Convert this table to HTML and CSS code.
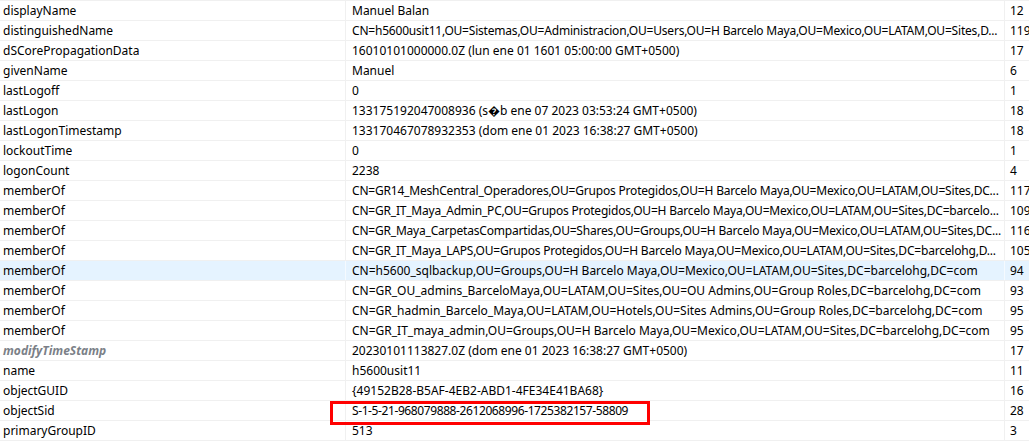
FILE: index.html
```html
<!DOCTYPE html>
<html>
<head>
<meta charset="utf-8">
<link rel="stylesheet" href="styles.css">
</head>
<body>
<div class="grid">
  <div class="row"><div class="c name">displayName</div><div class="c val">Manuel Balan</div><div class="c len">12</div></div>
  <div class="row"><div class="c name">distinguishedName</div><div class="c val tr">CN=h5600usit11,OU=Sistemas,OU=Administracion,OU=Users,OU=H Barcelo Maya,OU=Mexico,OU=LATAM,OU=Sites,D...</div><div class="c len">119</div></div>
  <div class="row"><div class="c name">dSCorePropagationData</div><div class="c val">16010101000000.0Z (lun ene 01 1601 05:00:00 GMT+0500)</div><div class="c len">17</div></div>
  <div class="row"><div class="c name">givenName</div><div class="c val">Manuel</div><div class="c len">6</div></div>
  <div class="row"><div class="c name">lastLogoff</div><div class="c val">0</div><div class="c len">1</div></div>
  <div class="row"><div class="c name">lastLogon</div><div class="c val">133175192047008936 (s�b ene 07 2023 03:53:24 GMT+0500)</div><div class="c len">18</div></div>
  <div class="row"><div class="c name">lastLogonTimestamp</div><div class="c val">133170467078932353 (dom ene 01 2023 16:38:27 GMT+0500)</div><div class="c len">18</div></div>
  <div class="row"><div class="c name">lockoutTime</div><div class="c val">0</div><div class="c len">1</div></div>
  <div class="row"><div class="c name">logonCount</div><div class="c val">2238</div><div class="c len">4</div></div>
  <div class="row"><div class="c name">memberOf</div><div class="c val tr">CN=GR14_MeshCentral_Operadores,OU=Grupos Protegidos,OU=H Barcelo Maya,OU=Mexico,OU=LATAM,OU=Sites,DC...</div><div class="c len">117</div></div>
  <div class="row"><div class="c name">memberOf</div><div class="c val tr">CN=GR_IT_Maya_Admin_PC,OU=Grupos Protegidos,OU=H Barcelo Maya,OU=Mexico,OU=LATAM,OU=Sites,DC=barcelo...</div><div class="c len">109</div></div>
  <div class="row"><div class="c name">memberOf</div><div class="c val tr">CN=GR_Maya_CarpetasCompartidas,OU=Shares,OU=Groups,OU=H Barcelo Maya,OU=Mexico,OU=LATAM,OU=Sites,DC...</div><div class="c len">116</div></div>
  <div class="row"><div class="c name">memberOf</div><div class="c val tr">CN=GR_IT_Maya_LAPS,OU=Grupos Protegidos,OU=H Barcelo Maya,OU=Mexico,OU=LATAM,OU=Sites,DC=barcelohg,D...</div><div class="c len">105</div></div>
  <div class="row hl"><div class="c name">memberOf</div><div class="c val">CN=h5600_sqlbackup,OU=Groups,OU=H Barcelo Maya,OU=Mexico,OU=LATAM,OU=Sites,DC=barcelohg,DC=com</div><div class="c len">94</div></div>
  <div class="row"><div class="c name">memberOf</div><div class="c val">CN=GR_OU_admins_BarceloMaya,OU=LATAM,OU=Sites,OU=OU Admins,OU=Group Roles,DC=barcelohg,DC=com</div><div class="c len">93</div></div>
  <div class="row"><div class="c name">memberOf</div><div class="c val">CN=GR_hadmin_Barcelo_Maya,OU=LATAM,OU=Hotels,OU=Sites Admins,OU=Group Roles,DC=barcelohg,DC=com</div><div class="c len">95</div></div>
  <div class="row"><div class="c name">memberOf</div><div class="c val">CN=GR_IT_maya_admin,OU=Groups,OU=H Barcelo Maya,OU=Mexico,OU=LATAM,OU=Sites,DC=barcelohg,DC=com</div><div class="c len">95</div></div>
  <div class="row"><div class="c name op">modifyTimeStamp</div><div class="c val">20230101113827.0Z (dom ene 01 2023 16:38:27 GMT+0500)</div><div class="c len">17</div></div>
  <div class="row"><div class="c name">name</div><div class="c val">h5600usit11</div><div class="c len">11</div></div>
  <div class="row"><div class="c name">objectGUID</div><div class="c val">{49152B28-B5AF-4EB2-ABD1-4FE34E41BA68}</div><div class="c len">16</div></div>
  <div class="row"><div class="c name">objectSid</div><div class="c val marked"><span class="txt">S-1-5-21-968079888-2612068996-1725382157-58809</span><span class="mark"></span></div><div class="c len">28</div></div>
  <div class="row"><div class="c name">primaryGroupID</div><div class="c val">513</div><div class="c len">3</div></div>
</div>
</body>
</html>
```
FILE: styles.css
```css
html, body {
  margin: 0;
  padding: 0;
  background: #ffffff;
  overflow: hidden;
}
body {
  font-family: "Noto Sans", "Open Sans", sans-serif;
  font-size: 12px;
  color: #000;
}
.grid {
  width: 1040px;
  border-top: 1px solid #f0f0f0;
}
.row {
  display: grid;
  grid-template-columns: 346px 659px 1fr;
  height: 19px;
  border-bottom: 1px solid #f0f0f0;
}
.row.hl {
  background: #e5f3ff;
}
.c {
  white-space: nowrap;
  overflow: hidden;
  line-height: 19px;
  border-right: 1px solid #f0f0f0;
}
.row.hl .c { border-right-color: #f5faff; }
.name { padding-left: 3px; }
.val { padding-left: 6px; }
.val.tr { letter-spacing: -0.2px; }
.len { padding-left: 5px; border-right: none; }
.op {
  font-weight: bold;
  font-style: italic;
  color: #7b7f87;
}
.marked { position: relative; overflow: visible; }
.marked .txt { letter-spacing: -0.4px; }
.mark {
  position: absolute;
  left: -16px;
  top: 0;
  width: 314px;
  height: 18px;
  border: 3px solid #ff0000;
}
```
